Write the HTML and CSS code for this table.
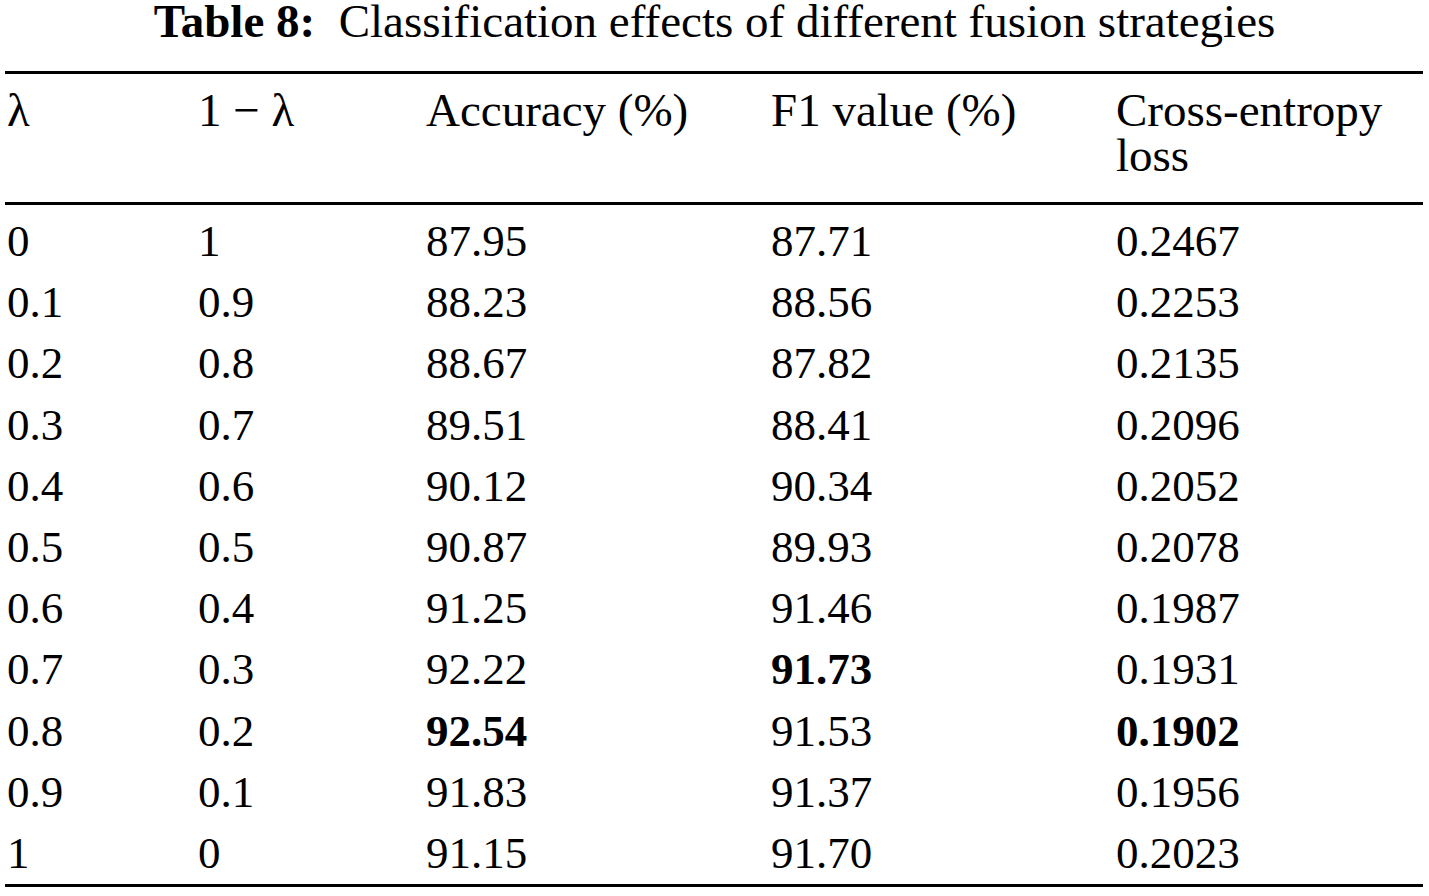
FILE: index.html
```html
<!DOCTYPE html>
<html>
<head>
<meta charset="utf-8">
<link rel="stylesheet" href="styles.css">
</head>
<body>
<div class="page">
  <div class="caption"><span class="label">Table 8:</span>&nbsp; Classification effects of different fusion strategies</div>
  <table class="results">
    <colgroup>
      <col class="c1"><col class="c2"><col class="c3"><col class="c4"><col class="c5">
    </colgroup>
    <thead>
      <tr><th>λ</th><th>1 − λ</th><th>Accuracy (%)</th><th>F1 value (%)</th><th>Cross-entropy<br>loss</th></tr>
    </thead>
    <tbody>
      <tr><td>0</td><td>1</td><td>87.95</td><td>87.71</td><td>0.2467</td></tr>
      <tr><td>0.1</td><td>0.9</td><td>88.23</td><td>88.56</td><td>0.2253</td></tr>
      <tr><td>0.2</td><td>0.8</td><td>88.67</td><td>87.82</td><td>0.2135</td></tr>
      <tr><td>0.3</td><td>0.7</td><td>89.51</td><td>88.41</td><td>0.2096</td></tr>
      <tr><td>0.4</td><td>0.6</td><td>90.12</td><td>90.34</td><td>0.2052</td></tr>
      <tr><td>0.5</td><td>0.5</td><td>90.87</td><td>89.93</td><td>0.2078</td></tr>
      <tr><td>0.6</td><td>0.4</td><td>91.25</td><td>91.46</td><td>0.1987</td></tr>
      <tr><td>0.7</td><td>0.3</td><td>92.22</td><td class="best">91.73</td><td>0.1931</td></tr>
      <tr><td>0.8</td><td>0.2</td><td class="best">92.54</td><td>91.53</td><td class="best">0.1902</td></tr>
      <tr><td>0.9</td><td>0.1</td><td>91.83</td><td>91.37</td><td>0.1956</td></tr>
      <tr><td>1</td><td>0</td><td>91.15</td><td>91.70</td><td>0.2023</td></tr>
    </tbody>
  </table>
</div>
</body>
</html>
```
FILE: styles.css
```css
html, body {
  margin: 0;
  padding: 0;
  background: #ffffff;
}
body {
  font-family: "Liberation Serif", "Times New Roman", serif;
  color: #000000;
}
.page {
  width: 1429px;
  height: 896px;
  overflow: hidden;
}
.caption {
  text-align: center;
  font-size: 47px;
  line-height: 43px;
  height: 71px;
  box-sizing: border-box;
  white-space: nowrap;
}
.caption .label {
  font-weight: bold;
}
.results {
  margin-left: 5px;
  width: 1418px;
  table-layout: fixed;
  border-collapse: collapse;
  font-size: 45px;
}
.c1 { width: 191px; }
.c2 { width: 228px; }
.c3 { width: 345px; }
.c4 { width: 345px; }
.c5 { width: 309px; }
.results thead tr {
  border-top: 3px solid #000;
  border-bottom: 3px solid #000;
}
.results th {
  font-weight: normal;
  font-size: 47px;
  text-align: left;
  vertical-align: top;
  line-height: 45px;
  padding: 14px 0 24px 2px;
  white-space: nowrap;
}
.results tbody tr:last-child {
  border-bottom: 3px solid #000;
}
.results td {
  text-align: left;
  line-height: 61.2px;
  padding: 0 0 0 2px;
  white-space: nowrap;
}
.results tbody tr:first-child td {
  padding-top: 6px;
}
.results td.best {
  font-weight: bold;
}
```
